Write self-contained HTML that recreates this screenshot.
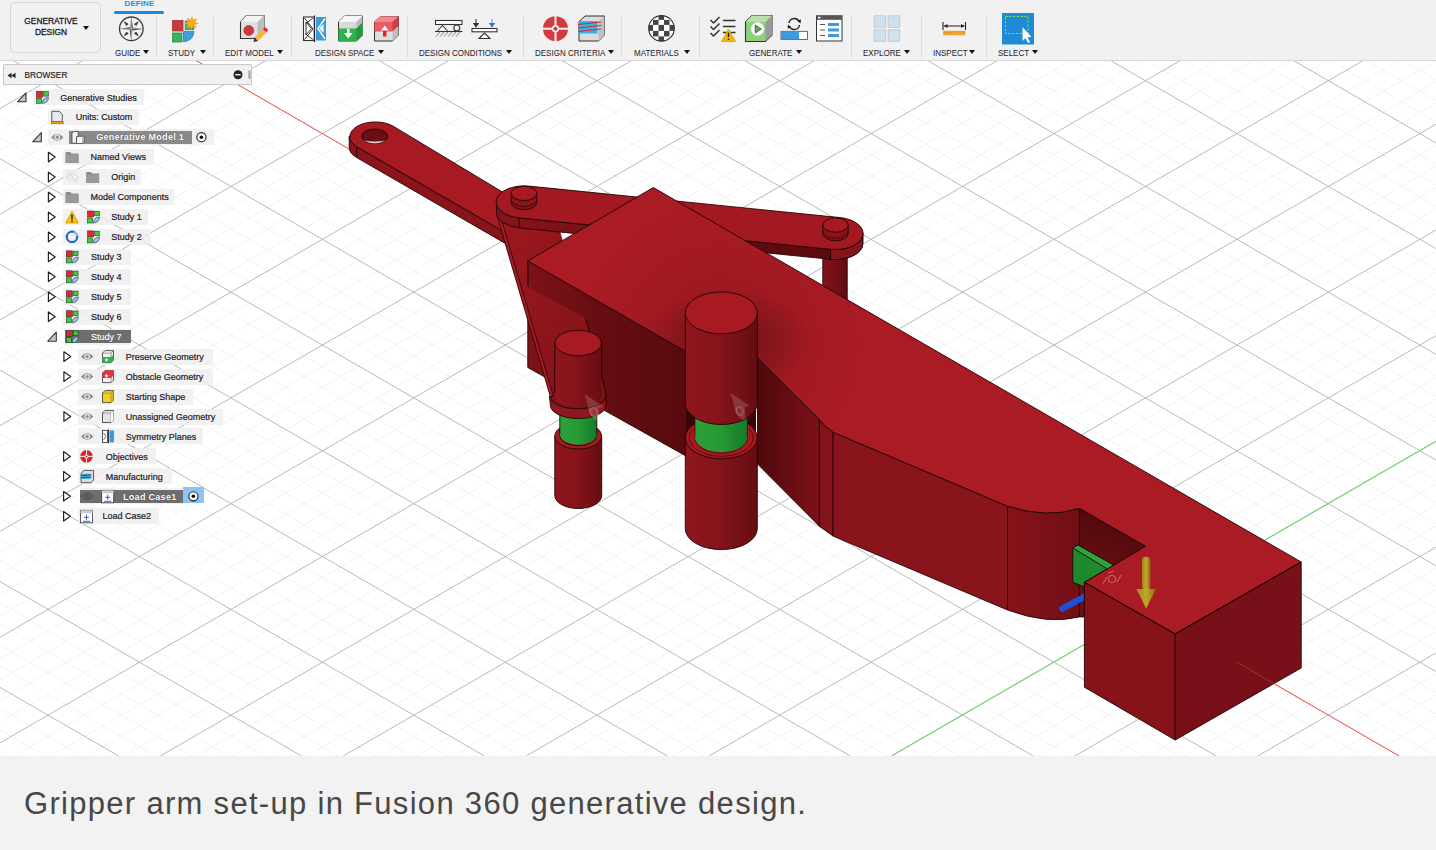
<!DOCTYPE html>
<html><head><meta charset="utf-8"><title>Gripper arm set-up</title>
<style>
*{margin:0;padding:0;box-sizing:border-box}
html,body{width:1436px;height:850px;overflow:hidden;background:#fff;font-family:"Liberation Sans",sans-serif}
#tb{position:absolute;left:0;top:0;width:1436px;height:61px;background:#f1f1f1;border-bottom:1px solid #d6d6d6}
.gdbox{position:absolute;left:10px;top:2px;width:91px;height:51px;border:1px solid #d8d8d8;border-radius:5px}
.gdt{position:absolute;left:0;top:13px;width:80px;text-align:center;font-size:8.4px;line-height:11.3px;color:#1c1c28;-webkit-text-stroke:0.3px #1c1c28}
.tri{position:absolute;width:0;height:0;border-left:3px solid transparent;border-right:3px solid transparent;border-top:4px solid #111}
.define{position:absolute;left:124.5px;top:-1.2px;font-size:8px;font-weight:bold;color:#1d8fe1;letter-spacing:0.1px}
.defbar{position:absolute;left:114px;top:10.5px;width:50px;height:3.3px;border-radius:2px;background:#1a8ad8}
.sep{position:absolute;top:15px;width:1px;height:42px;background:#dcdcdc}
.lbl{position:absolute;top:48.2px;font-size:8px;line-height:10px;color:#2a2a34;white-space:nowrap;transform:scaleY(1.2);transform-origin:0 0;-webkit-text-stroke:0.05px #2a2a34}
#vp{position:absolute;left:0;top:60px;width:1436px;height:696px;background:#fff;overflow:hidden}
#cap{position:absolute;left:0;top:756px;width:1436px;height:94px;background:#f2f2f2}
#cap div{position:absolute;left:24px;top:30px;font-size:31px;line-height:36px;color:#474747;white-space:nowrap;letter-spacing:1.3px}
.bhdr{position:absolute;left:3px;top:64px;width:249px;height:20.5px;border-radius:2px 2px 0 0;background:#f0f0f0;border:1px solid #c9c9c9}
.bhtxt{position:absolute;left:20.5px;top:4.5px;font-size:8.3px;line-height:11px;color:#222;-webkit-text-stroke:0.15px #222}
.rbg{position:absolute;height:16px;background:rgba(238,238,238,0.85)}
.rhl{position:absolute;height:13px;background:#7b7b7b}
.rblue{position:absolute;width:20.6px;height:16.4px;background:#8cc4f5}
.rtxt{position:absolute;font-size:9px;line-height:10px;color:#1a1a26;white-space:nowrap;margin-top:2.3px;-webkit-text-stroke:0.2px #1a1a26}
.hlt{color:#fff;-webkit-text-stroke:0.2px #fff;text-shadow:0 0 1px #333}
.hlb{font-weight:bold;letter-spacing:0.3px;-webkit-text-stroke:0}
</style></head><body>
<svg width="1436" height="850" viewBox="0 0 1436 850" style="position:absolute;left:0;top:0">
<rect x="0" y="59" width="1436" height="697" fill="#fff"/>
<path d="M1400.6 59.0L1436.0 79.5M1364.0 59.0L1436.0 100.6M1327.5 59.0L1436.0 121.8M1254.3 59.0L1436.0 164.0M1217.7 59.0L1436.0 185.2M1181.1 59.0L1436.0 206.3M1144.5 59.0L1436.0 227.5M1071.4 59.0L1436.0 269.8M1034.8 59.0L1436.0 290.9M998.2 59.0L1436.0 312.1M961.6 59.0L1436.0 333.2M888.5 59.0L1436.0 375.5M851.9 59.0L1436.0 396.7M815.3 59.0L1436.0 417.8M778.7 59.0L1436.0 439.0M705.6 59.0L1436.0 481.3M669.0 59.0L1436.0 502.4M632.4 59.0L1436.0 523.6M595.8 59.0L1436.0 544.7M522.7 59.0L1436.0 587.0M486.1 59.0L1436.0 608.2M449.5 59.0L1436.0 629.3M412.9 59.0L1436.0 650.5M339.7 59.0L1436.0 692.7M303.2 59.0L1436.0 713.9M266.6 59.0L1436.0 735.0M230.0 59.0L1435.7 756.0M156.8 59.0L1362.5 756.0M120.3 59.0L1325.9 756.0M83.7 59.0L1289.3 756.0M47.1 59.0L1252.8 756.0M0.0 74.1L1179.6 756.0M0.0 95.2L1143.0 756.0M0.0 116.4L1106.4 756.0M0.0 137.5L1069.9 756.0M0.0 179.8L996.7 756.0M0.0 201.0L960.1 756.0M0.0 222.1L923.5 756.0M0.0 243.3L886.9 756.0M0.0 285.6L813.8 756.0M0.0 306.7L777.2 756.0M0.0 327.9L740.6 756.0M0.0 349.0L704.0 756.0M0.0 391.3L630.9 756.0M0.0 412.4L594.3 756.0M0.0 433.6L557.7 756.0M0.0 454.7L521.1 756.0M0.0 497.0L448.0 756.0M0.0 518.2L411.4 756.0M0.0 539.3L374.8 756.0M0.0 560.5L338.2 756.0M0.0 602.8L265.1 756.0M0.0 623.9L228.5 756.0M0.0 645.1L191.9 756.0M0.0 666.2L155.3 756.0M0.0 708.5L82.1 756.0M0.0 729.7L45.6 756.0M0.0 750.8L9.0 756.0M0.0 66.2L12.4 59.0M0.0 87.3L49.0 59.0M0.0 129.6L122.2 59.0M0.0 150.8L158.7 59.0M0.0 171.9L195.3 59.0M0.0 193.1L231.9 59.0M0.0 235.4L305.1 59.0M0.0 256.5L341.7 59.0M0.0 277.7L378.2 59.0M0.0 298.8L414.8 59.0M0.0 341.1L488.0 59.0M0.0 362.2L524.6 59.0M0.0 383.4L561.1 59.0M0.0 404.5L597.7 59.0M0.0 446.8L670.9 59.0M0.0 468.0L707.5 59.0M0.0 489.1L744.1 59.0M0.0 510.3L780.6 59.0M0.0 552.6L853.8 59.0M0.0 573.7L890.4 59.0M0.0 594.9L927.0 59.0M0.0 616.0L963.5 59.0M0.0 658.3L1036.7 59.0M0.0 679.5L1073.3 59.0M0.0 700.6L1109.9 59.0M0.0 721.8L1146.5 59.0M13.9 756.0L1219.6 59.0M50.5 756.0L1256.2 59.0M87.1 756.0L1292.8 59.0M123.7 756.0L1329.4 59.0M196.9 756.0L1402.5 59.0M233.4 756.0L1436.0 60.8M270.0 756.0L1436.0 81.9M306.6 756.0L1436.0 103.1M379.8 756.0L1436.0 145.4M416.3 756.0L1436.0 166.5M452.9 756.0L1436.0 187.7M489.5 756.0L1436.0 208.8M562.7 756.0L1436.0 251.1M599.3 756.0L1436.0 272.3M635.8 756.0L1436.0 293.4M672.4 756.0L1436.0 314.6M745.6 756.0L1436.0 356.9M782.2 756.0L1436.0 378.0M818.7 756.0L1436.0 399.2M855.3 756.0L1436.0 420.3M928.5 756.0L1436.0 462.6M965.1 756.0L1436.0 483.8M1001.7 756.0L1436.0 504.9M1038.2 756.0L1436.0 526.1M1111.4 756.0L1436.0 568.3M1148.0 756.0L1436.0 589.5M1184.6 756.0L1436.0 610.6M1221.1 756.0L1436.0 631.8M1294.3 756.0L1436.0 674.1M1330.9 756.0L1436.0 695.2M1367.5 756.0L1436.0 716.4M1404.1 756.0L1436.0 737.5" stroke="#f3f3f3" stroke-width="1" fill="none"/>
<path d="M1290.9 59.0L1436.0 142.9M1108.0 59.0L1436.0 248.6M925.1 59.0L1436.0 354.4M742.1 59.0L1436.0 460.1M559.2 59.0L1436.0 565.9M376.3 59.0L1436.0 671.6M193.4 59.0L1399.1 756.0M10.5 59.0L1216.2 756.0M0.0 158.7L1033.3 756.0M0.0 264.4L850.4 756.0M0.0 370.1L667.5 756.0M0.0 475.9L484.5 756.0M0.0 581.6L301.6 756.0M0.0 687.4L118.7 756.0M0.0 108.5L85.6 59.0M0.0 214.2L268.5 59.0M0.0 320.0L451.4 59.0M0.0 425.7L634.3 59.0M0.0 531.4L817.2 59.0M0.0 637.2L1000.1 59.0M0.0 742.9L1183.0 59.0M160.3 756.0L1365.9 59.0M343.2 756.0L1436.0 124.2M526.1 756.0L1436.0 230.0M709.0 756.0L1436.0 335.7M891.9 756.0L1436.0 441.5M1074.8 756.0L1436.0 547.2M1257.7 756.0L1436.0 652.9" stroke="#b5b5b5" stroke-width="0.95" fill="none"/>
<path d="M195.1 60 L1399.1 756" stroke="#ff5a5a" stroke-width="1" fill="none"/>
<path d="M892 755.5 L1436 441" stroke="#5de05d" stroke-width="1" fill="none"/>
</svg>
<svg id="model" width="1436" height="850" viewBox="0 0 1436 850" style="position:absolute;left:0;top:0">
<defs>
  <linearGradient id="gCyl" x1="0" x2="1" y1="0" y2="0">
    <stop offset="0" stop-color="#8f161d"/><stop offset="0.45" stop-color="#86141b"/><stop offset="1" stop-color="#660d12"/>
  </linearGradient>
  <linearGradient id="gGreen" x1="0" x2="1" y1="0" y2="0">
    <stop offset="0" stop-color="#2ea03a"/><stop offset="0.5" stop-color="#259a33"/><stop offset="1" stop-color="#17782a"/>
  </linearGradient>
  <linearGradient id="gCham" x1="0" x2="1" y1="0" y2="0">
    <stop offset="0" stop-color="#4e080c"/><stop offset="1" stop-color="#7c1218"/>
  </linearGradient>
  <linearGradient id="gRecess" x1="0" x2="1" y1="0" y2="0">
    <stop offset="0" stop-color="#7e1218"/><stop offset="0.45" stop-color="#660d12"/><stop offset="1" stop-color="#580a0e"/>
  </linearGradient>
  <linearGradient id="gGusset" x1="0" x2="1" y1="0" y2="1">
    <stop offset="0" stop-color="#9e1820"/><stop offset="1" stop-color="#7e1218"/>
  </linearGradient>
  <linearGradient id="gNotch" x1="0" x2="1" y1="0" y2="0">
    <stop offset="0" stop-color="#86131a"/><stop offset="1" stop-color="#720f15"/>
  </linearGradient>
  <radialGradient id="gTopShade" gradientUnits="userSpaceOnUse" cx="720" cy="345" r="150">
    <stop offset="0" stop-color="#000" stop-opacity="0.12"/><stop offset="1" stop-color="#000" stop-opacity="0"/>
  </radialGradient>
  <linearGradient id="gNotchWall" gradientUnits="userSpaceOnUse" x1="1120" y1="525" x2="1095" y2="590">
    <stop offset="0" stop-color="#520a0d"/><stop offset="1" stop-color="#6e0f14"/>
  </linearGradient>
  <linearGradient id="gLinkSide" gradientUnits="userSpaceOnUse" x1="519" y1="0" x2="760" y2="0">
    <stop offset="0" stop-color="#85131a"/><stop offset="1" stop-color="#5e0b10"/>
  </linearGradient>
  <linearGradient id="gPost" x1="0" x2="1" y1="0" y2="0">
    <stop offset="0" stop-color="#85131a"/><stop offset="1" stop-color="#600c11"/>
  </linearGradient>
  <clipPath id="cpTop"><path d="M527.8 260.9 L653.3 187.5 L1301.2 562 L1175.2 634 L1084.4 582.3 L1145.3 546.3 L1079.4 508.5 Q1048 519 1007.5 506.4 L833.1 432.4 Q826 428.5 819.4 419.7 L757.5 357.9 L687.8 352.6Z"/></clipPath>
  <radialGradient id="gAO">
    <stop offset="0" stop-color="#000" stop-opacity="0.22"/><stop offset="0.5" stop-color="#000" stop-opacity="0.16"/><stop offset="1" stop-color="#000" stop-opacity="0"/>
  </radialGradient>
  <linearGradient id="gArrow" x1="0" x2="1" y1="0" y2="0">
    <stop offset="0" stop-color="#a08818"/><stop offset="0.5" stop-color="#c4a72a"/><stop offset="1" stop-color="#857010"/>
  </linearGradient>
</defs>
<g stroke="#1e0406" stroke-width="0.9" stroke-linejoin="round">
  <!-- vertical post under right link pivot -->
  <rect x="822.8" y="245" width="24.4" height="56" fill="url(#gPost)"/>
  <!-- lever arm side face -->
  <path d="M349.2 136.3 A25.5 14.7 0 0 0 356.7 146.7 L525 243.9 L525 254.8 L356.7 157.6 A25.5 14.7 0 0 1 349.2 147.2Z" fill="#8a141b"/>
  <line x1="356.7" y1="146.7" x2="356.7" y2="157.6"/>
  <!-- lever arm top face -->
  <path d="M392.7 125.9 A25.5 14.7 0 0 0 356.7 146.7 L525 243.9 L530 208.6Z" fill="#a81a22"/>
  <!-- hole -->
  <ellipse cx="374.7" cy="136.3" rx="12.9" ry="7.3" fill="#6a0e13"/>
  <path d="M364 140.5 Q374.7 146.5 385.4 140.5 Q374.7 142.5 364 140.5Z" fill="#cfcfcf" stroke="none"/>

  <!-- body left recessed front face -->
  <path d="M527.8 260.9 L687.8 352.6 L687.8 457 L527.8 367.5Z" fill="url(#gRecess)"/>

  <!-- lower small cylinder -->
  <path d="M554.8 436 L554.8 495.5 A23.4 13 0 0 0 601.7 495.5 L601.7 436Z" fill="url(#gCyl)"/>
  <ellipse cx="578.2" cy="436" rx="23.4" ry="13" fill="#a51a21"/>
  <!-- green ring small -->
  <rect x="559.8" y="412" width="37" height="23.1" fill="url(#gGreen)" stroke="none"/>
  <path d="M559.8 412 L559.8 435.1 A18.5 10.7 0 0 0 596.8 435.1 L596.8 412" fill="none"/>
  <path d="M559.8 434 A18.5 10.7 0 0 0 596.8 434 Z" fill="url(#gGreen)" stroke="none"/>

  <!-- gusset band (thickness) -->
  <path d="M549.4 396 A27.6 13 0 0 0 605.9 395 L605.9 405 A27.6 13 0 0 1 550.5 406 Z" fill="#8e161d"/>
  <!-- gusset face -->
  <path d="M496.5 214 L560 231 L576.6 288.2 L527.8 260.9 L527.8 286.7 L585.5 318.2 L601.5 374 L605.9 395 A27.6 13 0 0 1 550.2 396 Z" fill="url(#gGusset)" stroke="none"/><path d="M585.5 318.2 L601.5 374 L605.9 395" fill="none"/>
  <path d="M496.5 214 L499.8 214 L553.5 396.5 L550.2 396 Z" fill="#a81b23" stroke-width="0.8"/>

  <!-- link plate side -->
  <path d="M496.5 202 A27.5 15.9 0 0 0 519.2 217.9 L830.5 249.3 A27.5 15.9 0 0 0 862.8 233.5 L862.8 243.5 A27.5 15.9 0 0 1 830.5 259.3 L519.2 227.9 A27.5 15.9 0 0 1 496.5 212Z" fill="url(#gLinkSide)"/>
  <line x1="519.2" y1="217.9" x2="519.2" y2="227.9"/>
  <path d="M830.5 249.3 A27.5 15.9 0 0 0 862.8 233.5 L862.8 243.5 A27.5 15.9 0 0 1 830.5 259.3Z" fill="#86141b"/>
  <line x1="830.5" y1="249.3" x2="830.5" y2="259.3"/>
  <!-- link plate top -->
  <path d="M528.8 186.1 L840.1 217.6 A27.5 15.9 0 0 1 830.5 249.3 L519.2 217.9 A27.5 15.9 0 0 1 528.8 186.1Z" fill="#a31921"/>
  <!-- pins -->
  <path d="M511.2 193.4 L511.2 202.4 A12.8 7.2 0 0 0 536.8 202.4 L536.8 193.4Z" fill="#8a141b"/>
  <path d="M511.2 199.5 A12.8 7.2 0 0 0 536.8 199.5" fill="none" stroke-width="0.7"/>
  <ellipse cx="524" cy="193.4" rx="12.8" ry="7.2" fill="#a81a22"/>
  <path d="M822.8 225 L822.8 233.5 A12.7 7.2 0 0 0 848.2 233.5 L848.2 225Z" fill="#8a141b"/>
  <path d="M822.8 231 A12.7 7.2 0 0 0 848.2 231" fill="none" stroke-width="0.7"/>
  <ellipse cx="835.5" cy="225" rx="12.7" ry="7.2" fill="#a81a22"/>

  <!-- band (body front face above gusset) -->
  <line x1="527.8" y1="260.9" x2="527.8" y2="286.7"/>

  <!-- body top face -->
  <path d="M527.8 260.9 L653.3 187.5 L1301.2 562 L1175.2 634 L1084.4 582.3 L1145.3 546.3 L1079.4 508.5 Q1048 519 1007.5 506.4 L833.1 432.4 Q826 428.5 819.4 419.7 L757.5 357.9 L687.8 352.6Z" fill="#ab1b24"/>

  <path d="M527.8 260.9 L653.3 187.5 L1301.2 562 L1175.2 634 L1084.4 582.3 L1145.3 546.3 L1079.4 508.5 Q1048 519 1007.5 506.4 L833.1 432.4 Q826 428.5 819.4 419.7 L757.5 357.9 L687.8 352.6Z" fill="url(#gTopShade)" stroke="none"/>
  <ellipse cx="728" cy="340" rx="85" ry="52" fill="url(#gAO)" stroke="none" clip-path="url(#cpTop)"/>
  <!-- chamfer face -->
  <path d="M757.5 357.9 L819.4 419.7 L819.4 526.2 L757.5 464Z" fill="url(#gCham)"/>
  <path d="M819.4 419.7 Q826 428.5 833.1 432.4 L833.1 536.1 L819.4 526.2Z" fill="#83131a"/>
  <!-- front face -->
  <path d="M833.1 432.4 L1007.5 506.4 L1007.5 610 L833.1 536.1Z" fill="#8a141b"/>
  <!-- notch fillet face -->
  <path d="M1007.5 506.4 Q1048 519 1079.4 508.5 L1079.4 616.9 Q1048 625 1007.5 610Z" fill="url(#gNotch)"/>
  <!-- notch dark back wall -->
  <path d="M1079.4 508.5 L1145.3 546.3 L1084.4 582.3 L1084.4 616.9 L1079.4 616.9Z" fill="url(#gNotchWall)"/>
  <!-- green block -->
  <path d="M1072.8 548 L1078 545 L1113.5 565 L1084.4 582.3 L1084.4 587 L1072.8 582.3Z" fill="#1f8a2c"/>
  <path d="M1072.8 548 L1078 545 L1113.5 565 L1107.5 569Z" fill="#2ea33b"/>
  <!-- blue rod -->
  <line x1="1062.5" y1="608.5" x2="1084" y2="597" stroke="#1d4fd8" stroke-width="6.5" stroke-linecap="round"/>

  <!-- block -->
  <path d="M1084.4 582.3 L1175.2 634 L1175.2 740 L1084.4 687.2Z" fill="#87131a"/>
  <path d="M1175.2 634 L1301.2 562 L1301.2 668 L1175.2 740Z" fill="#78101a"/>
  <path d="M1084.4 582.3 L1175.2 634 L1301.2 562" fill="none"/>

  <path d="M1236 661.7 L1301.2 699.4" stroke="#ff6060" stroke-opacity="0.35" stroke-width="1"/>
  <!-- upper small cylinder -->
  <path d="M554.8 343 L554.8 395 A23.4 13 0 0 0 601.7 395 L601.7 343Z" fill="url(#gCyl)" stroke="none"/>
  <path d="M554.8 343 L554.8 393 M601.7 343 L601.7 377" fill="none"/>
  <path d="M550.2 396 A27.6 13 0 0 0 605.9 395" fill="none" stroke-width="0.9"/>
  <ellipse cx="578.2" cy="343" rx="23.2" ry="12.8" fill="#a81a22"/>

  <!-- big cylinder: dark gap, lower, green, upper -->
  <rect x="686" y="408" width="70" height="32" fill="#3a0508" stroke="none"/>
  <path d="M685.3 437.8 L685.3 528.6 A36 21 0 0 0 757.3 528.6 L757.3 437.8Z" fill="url(#gCyl)"/>
  <ellipse cx="721.3" cy="437.8" rx="36" ry="21" fill="#a51a21"/>
  <ellipse cx="721.3" cy="437.8" rx="32" ry="18.5" fill="none" stroke-width="0.6"/>
  <rect x="695" y="405" width="52.4" height="33" fill="url(#gGreen)" stroke="none"/>
  <path d="M695 405 L695 437.9 A26.2 15.2 0 0 0 747.4 437.9 L747.4 405" fill="none" stroke-width="0.6"/>
  <path d="M695 437 A26.2 15.2 0 0 0 747.4 437Z" fill="url(#gGreen)" stroke="none"/>
  <path d="M685.3 312.9 L685.3 403.5 A36 21 0 0 0 757.3 403.5 L757.3 312.9Z" fill="url(#gCyl)"/>
  <ellipse cx="721.3" cy="312.9" rx="36" ry="21" fill="#a81a22"/>

  <!-- yellow arrow -->
  <g stroke="none">
    <rect x="1142" y="556.7" width="8.3" height="33" rx="4" fill="url(#gArrow)"/>
    <path d="M1136.3 589 L1156 589 L1146.2 608.6Z" fill="url(#gArrow)"/>
  </g>
</g>
<!-- ghost icons -->
<defs><g id="ghost">
  <path d="M-9.5 -13.5 Q-9 -14.8 -7.5 -13.8 L8.5 -3.2 Q9.8 -1.8 8 -1.5 L4.8 -1.2 L5.5 11 L2 11.5 Q-5.5 6.5 -6.2 -3 Q-6.8 -9 -9.5 -13.5Z" fill="#fff" fill-opacity="0.16"/>
  <ellipse cx="-0.3" cy="3" rx="3.4" ry="4.3" transform="rotate(-20 -0.3 3)" fill="none" stroke="#fff" stroke-opacity="0.2" stroke-width="1.1"/>
  <circle cx="-0.3" cy="3.2" r="1.3" fill="#000" fill-opacity="0.15"/>
</g></defs>
<use href="#ghost" x="740" y="408"/>
<use href="#ghost" x="594" y="409"/>
<g fill="none" stroke="#fff" stroke-opacity="0.3" stroke-width="1.2">
  <circle cx="1112" cy="579" r="3.5"/><path d="M1103 584 L1107 577 M1117 582 L1121 575 M1108 573 L1114 571"/>
</g>
</svg>

<div id="cap"><div>Gripper arm set-up in Fusion 360 generative design.</div></div>
<div id="tb">
  <div class="gdbox"><div class="gdt">GENERATIVE<br>DESIGN</div><div class="tri" style="left:72px;top:23px"></div></div>
  <div class="define">DEFINE</div>
  <div class="defbar"></div>
  <div class="sep" style="left:156px"></div>
  <div class="sep" style="left:213px"></div>
  <div class="sep" style="left:291px"></div>
  <div class="sep" style="left:407px"></div>
  <div class="sep" style="left:523px"></div>
  <div class="sep" style="left:621px"></div>
  <div class="sep" style="left:699px"></div>
  <div class="sep" style="left:851px"></div>
  <div class="sep" style="left:921px"></div>
  <div class="sep" style="left:986px"></div>

  <div class="lbl" style="left:115px">GUIDE</div><div class="tri" style="left:143px;top:50px"></div>
  <div class="lbl" style="left:168px">STUDY</div><div class="tri" style="left:200px;top:50px"></div>
  <div class="lbl" style="left:225px">EDIT MODEL</div><div class="tri" style="left:277px;top:50px"></div>
  <div class="lbl" style="left:315px">DESIGN SPACE</div><div class="tri" style="left:378px;top:50px"></div>
  <div class="lbl" style="left:419px">DESIGN CONDITIONS</div><div class="tri" style="left:506px;top:50px"></div>
  <div class="lbl" style="left:535px">DESIGN CRITERIA</div><div class="tri" style="left:608px;top:50px"></div>
  <div class="lbl" style="left:634px">MATERIALS</div><div class="tri" style="left:684px;top:50px"></div>
  <div class="lbl" style="left:749px">GENERATE</div><div class="tri" style="left:796px;top:50px"></div>
  <div class="lbl" style="left:863px">EXPLORE</div><div class="tri" style="left:904px;top:50px"></div>
  <div class="lbl" style="left:933px">INSPECT</div><div class="tri" style="left:969px;top:50px"></div>
  <div class="lbl" style="left:998px">SELECT</div><div class="tri" style="left:1032px;top:50px"></div>

  <svg id="tbicons" width="1436" height="59" viewBox="0 0 1436 59" style="position:absolute;left:0;top:0">
    <!-- guide compass -->
    <g transform="translate(131.3,28.8)">
      <circle r="11.8" fill="none" stroke="#3a3a3a" stroke-width="1.3"/>
      <path d="M0 -12.5 L1.6 -1.6 L0 0Z M12.5 0 L1.6 1.6 L0 0Z M0 12.5 L-1.6 1.6 L0 0Z M-12.5 0 L-1.6 -1.6 L0 0Z" fill="#555"/>
      <path d="M0 -12.5 L-1.2 -1.2 L0 0Z M12.5 0 L1.2 -1.2 L0 0Z M0 12.5 L1.2 1.2 L0 0Z M-12.5 0 L-1.2 1.2 L0 0Z" fill="#888"/>
      <path d="M-6.8 -6.8 L-3.2 -4.8 L-4.8 -3.2Z M6.8 -6.8 L4.8 -3.2 L3.2 -4.8Z M6.8 6.8 L3.2 4.8 L4.8 3.2Z M-6.8 6.8 L-4.8 3.2 L-3.2 4.8Z" fill="#444" stroke="#444" stroke-width="1"/>
    </g>
    <!-- study -->
    <rect x="172.5" y="20.5" width="10.5" height="10.5" fill="#c9393f" stroke="#b02a30" stroke-width="0.8"/>
    <rect x="172.5" y="33" width="9.5" height="9" fill="#3ab35a" stroke="#259040" stroke-width="0.8"/>
    <rect x="185.2" y="21" width="8.5" height="8.7" fill="#3ab35a" stroke="#259040" stroke-width="0.8"/>
    <path d="M183.5 41.8 L183.5 31.5 L194 31.5 Q193.5 40.5 183.5 41.8Z" fill="#3e9ee0" stroke="#2a7fc0" stroke-width="0.8"/>
    <path d="M192 15.5 L193.3 19.8 L197.6 18 L195.3 22 L199.3 23.5 L195 24.8 L196.8 28.8 L192.7 26.6 L191.2 30.6 L189.9 26.4 L185.8 28.3 L188 24.2 L184 22.9 L188.3 21.6 L186.5 17.6 L190.6 19.8Z" fill="#f5a623"/>
    <!-- edit model -->
    <g>
      <path d="M240.5 22 L246.5 15.5 L264 15.5 L264 31 L257 38.5 L240.5 38.5Z" fill="#e0e0e0" stroke="#333" stroke-width="1.1"/>
      <path d="M240.5 22 L246.5 15.5 L264 15.5 L257.5 22Z" fill="#f4f4f4"/>
      <path d="M257.5 22 L264 15.5 L264 31 L257.5 38Z" fill="#bdbdbd"/>
      <circle cx="248.8" cy="30.5" r="5" fill="#c9393f" stroke="#a8262c" stroke-width="0.6"/>
      <path d="M254.5 37.5 L263 29 L266.5 32.5 L258 41Z" fill="#f5b43c"/>
      <path d="M263 29 L265 27 L268 30 L266.5 32.5Z" fill="#e8202a"/>
      <path d="M254.5 37.5 L258 41 L253.5 42Z" fill="#333"/>
    </g>
    <!-- symmetry -->
    <g>
      <rect x="303.5" y="17" width="10.8" height="23.5" fill="#fff" stroke="#333" stroke-width="1.1"/>
      <path d="M304.5 18 L313 29 L304.5 39.5 M313 18 L305.5 24 M313 39.5 L305.5 34 M306 22 L306 35 L311.5 28.5Z" fill="none" stroke="#333" stroke-width="1"/>
      <line x1="314.5" y1="15.5" x2="314.5" y2="42" stroke="#222" stroke-width="1.2"/>
      <rect x="316" y="17" width="10" height="23.5" fill="#3c9be0"/>
      <path d="M325 18.5 L318 28.5 L325 39" fill="none" stroke="#fff" stroke-width="1.4"/>
      <path d="M323.5 24 L319.5 28.5 L323.5 33Z" fill="#fff"/>
    </g>
    <!-- green cube -->
    <g>
      <path d="M338.5 22 L344.5 16 L362.5 16 L362.5 35 L356.5 41 L338.5 41Z" fill="#d9d9d9" stroke="#333" stroke-width="1"/>
      <path d="M338.5 22 L344.5 16 L362.5 16 L356.5 22Z" fill="#f6f6f6"/>
      <path d="M356.5 22 L362.5 16 L362.5 35 L356.5 41Z" fill="#bdbdbd"/>
      <path d="M338.5 28.5 L356.5 28.5 L362.5 22.5 L362.5 35 L356.5 41 L338.5 41Z" fill="#2fb24e"/>
      <path d="M356.5 28.5 L362.5 22.5 L362.5 35 L356.5 41Z" fill="#27963f"/>
      <path d="M347 29 L349.5 29 L349.5 33 L352.5 33 L348.3 38.5 L344 33 L347 33Z" fill="#fff"/>
    </g>
    <!-- red cube -->
    <g>
      <path d="M374.5 22 L380.5 16.5 L398.5 16.5 L398.5 35 L392.5 41 L374.5 41Z" fill="#dedede" stroke="#333" stroke-width="1"/>
      <path d="M374.5 22 L380.5 16.5 L398.5 16.5 L398.5 26 L392.5 31.5 L374.5 31.5Z" fill="#e85c62"/>
      <path d="M374.5 22 L380.5 16.5 L398.5 16.5 L392.5 22Z" fill="#f08a8e"/>
      <path d="M392.5 22 L398.5 16.5 L398.5 26 L392.5 31.5Z" fill="#c94047"/>
      <path d="M392.5 31.5 L398.5 26 L398.5 35 L392.5 41Z" fill="#bdbdbd"/>
      <rect x="383" y="30" width="3.5" height="6.5" fill="#e8202a"/>
      <path d="M384.8 25.5 L388.5 30.5 L381 30.5Z" fill="#fff"/>
    </g>
    <!-- support icon -->
    <g stroke="#333" fill="none" stroke-width="1.1">
      <rect x="435.5" y="20.5" width="26.5" height="4" fill="#fff"/>
      <path d="M437.5 31 L442.5 25.5 L447.5 31" fill="#fff"/>
      <circle cx="456.8" cy="28" r="3"/>
      <line x1="435" y1="31.5" x2="462.5" y2="31.5"/>
      <path d="M436 36.5 L440 32 M440 36.5 L444 32 M444 36.5 L448 32 M448 36.5 L452 32 M452 36.5 L456 32 M456 36.5 L460 32" stroke="#777" stroke-width="0.9"/>
    </g>
    <!-- load icon -->
    <g stroke="#333" fill="none" stroke-width="1.1">
      <rect x="472" y="28.5" width="25" height="3.3" fill="#fff"/>
      <path d="M479 38.5 L484.5 33 L490 38.5Z" fill="#fff"/>
      <line x1="476" y1="19" x2="476" y2="25"/>
      <path d="M473.8 23.5 L476 26.8 L478.2 23.5Z" fill="#333"/>
      <line x1="492" y1="19" x2="492" y2="25" stroke="#5a9af0"/>
      <path d="M489.8 23.5 L492 26.8 L494.2 23.5Z" fill="#2a76e8" stroke="#2a76e8"/>
    </g>
    <!-- target -->
    <g transform="translate(555.5,28.7)">
      <circle r="12.5" fill="#d23a3f"/>
      <rect x="-1" y="-13" width="2" height="26" fill="#f1f1f1"/>
      <rect x="-13" y="-1" width="26" height="2" fill="#f1f1f1"/>
      <circle r="3.6" fill="#f1f1f1"/>
      <circle r="2" fill="#d23a3f"/>
    </g>
    <!-- criteria cube -->
    <g>
      <path d="M579 21.5 L585 16 L604.5 16 L604.5 35 L598.5 41 L579 41Z" fill="#dcdcdc" stroke="#333" stroke-width="1"/>
      <path d="M598.5 21.5 L604.5 16 L604.5 35 L598.5 41Z" fill="#c0c0c0"/>
      <rect x="579" y="21" width="18.5" height="12.5" fill="#2fb3ea"/>
      <path d="M578 24.5 L601 22 M578 28 L601 25.5 M578 31.5 L601 29" stroke="#e8202a" stroke-width="1.1"/>
    </g>
    <!-- materials sphere -->
    <g transform="translate(661.5,28.4)">
      <clipPath id="sph"><circle r="13"/></clipPath>
      <circle r="13" fill="#fff"/>
      <g clip-path="url(#sph)" fill="#444">
        <rect x="-3" y="-13" width="5.5" height="4.5"/>
        <rect x="-8.5" y="-8.5" width="5.5" height="5"/><rect x="2.5" y="-8.5" width="5.5" height="5"/>
        <rect x="-13" y="-3.5" width="4.5" height="6"/><rect x="-3" y="-3.5" width="5.5" height="6"/><rect x="8" y="-3.5" width="5" height="6"/>
        <rect x="-8.5" y="2.5" width="5.5" height="5.5"/><rect x="2.5" y="2.5" width="5.5" height="5.5"/>
        <rect x="-3" y="8" width="5.5" height="5"/>
      </g>
      <circle r="12.8" fill="none" stroke="#333" stroke-width="1.1"/>
    </g>
    <!-- checklist -->
    <g stroke="#333" stroke-width="1.5" fill="none">
      <path d="M710.5 20 L713.5 23 L719.5 17 M710.5 26.5 L713.5 29.5 L719.5 23.5 M710.5 33 L713.5 36 L719.5 30"/>
      <path d="M723 20.5 L735.5 20.5 M723 26.5 L735.5 26.5 M723 32.5 L735.5 32.5"/>
      <path d="M728.5 29 L735.5 41.5 L721.5 41.5Z" fill="#f5b800" stroke="#e0a000" stroke-width="0.8"/>
      <path d="M728.5 32.5 L728.5 37 M728.5 38.5 L728.5 40" stroke="#222" stroke-width="1.4"/>
    </g>
    <!-- play cube -->
    <g>
      <path d="M745.5 22 L752 15.5 L772 15.5 L772 35 L765.5 41.5 L745.5 41.5Z" fill="#8fd07a" stroke="#333" stroke-width="1.1"/>
      <path d="M765.5 22 L772 15.5 L772 35 L765.5 41.5Z" fill="#9a9a9a"/>
      <path d="M745.5 22 L752 15.5 L772 15.5 L765.5 22Z" fill="#b8e0a8"/>
      <circle cx="757.5" cy="29" r="6.5" fill="#fff" stroke="#ddd" stroke-width="0.8"/>
      <path d="M755.2 25 L761.5 29 L755.2 33Z" fill="#4cb748" stroke="#333" stroke-width="0.7"/>
    </g>
    <!-- sync toggle -->
    <g>
      <path d="M789 23 A5.3 5.3 0 0 1 799 21.5 M799.5 25 A5.3 5.3 0 0 1 789.5 26.5" fill="none" stroke="#222" stroke-width="1.4"/>
      <path d="M797 20.5 L801 19.5 L800.5 23.5Z M791.5 27.5 L787.5 28.5 L788 24.5Z" fill="#222"/>
      <rect x="781" y="31.3" width="26.5" height="8.2" fill="#fff" stroke="#444" stroke-width="0.8"/>
      <rect x="781" y="31.3" width="18" height="8.2" fill="#3d9be0"/>
    </g>
    <!-- list window -->
    <g>
      <rect x="816.5" y="15.8" width="25.5" height="25.2" fill="#fff" stroke="#333" stroke-width="1"/>
      <rect x="816.5" y="15.8" width="25.5" height="4" fill="#555"/>
      <rect x="818" y="16.8" width="2.5" height="1.5" fill="#fff"/>
      <path d="M820 24.5 L825 24.5 M820 30 L825 30 M820 35.5 L825 35.5" stroke="#555" stroke-width="1.2"/>
      <rect x="828" y="23" width="11" height="3" fill="#3d9be0"/>
      <rect x="828" y="28.5" width="11" height="3" fill="#3d9be0"/>
      <rect x="828" y="34" width="11" height="3" fill="#3d9be0"/>
    </g>
    <!-- explore grid -->
    <g fill="#cfe1ef" stroke="#c9c9c9" stroke-width="1">
      <rect x="874.2" y="15.8" width="11.5" height="11.5"/><rect x="888.2" y="15.8" width="11.5" height="11.5"/>
      <rect x="874.2" y="29.8" width="11.5" height="11.5"/><rect x="888.2" y="29.8" width="11.5" height="11.5"/>
    </g>
    <!-- inspect -->
    <g>
      <rect x="943" y="30.8" width="22.5" height="4.5" fill="#f5a428"/>
      <path d="M945 31.5 v1.5 M948 31.5 v1 M951 31.5 v1.5 M954 31.5 v1 M957 31.5 v1.5 M960 31.5 v1 M963 31.5 v1.5" stroke="#a66" stroke-width="0.6"/>
      <path d="M943 22 v8 M965.5 22 v8" stroke="#222" stroke-width="1.1"/>
      <path d="M944 26 L964.5 26" stroke="#222" stroke-width="1"/>
      <path d="M944 26 L947.5 24 L947.5 28Z M964.5 26 L961 24 L961 28Z" fill="#222"/>
    </g>
    <!-- select -->
    <g>
      <rect x="1002" y="13" width="32" height="31.5" fill="#1f8ad6"/>
      <rect x="1005.5" y="16.5" width="22.5" height="17" fill="none" stroke="#7ee35a" stroke-width="1.1" stroke-dasharray="2.2 1.6"/>
      <path d="M1022.5 27 L1022.5 41 L1025.5 38 L1028 43 L1030 42 L1027.6 37.2 L1031.5 37Z" fill="#fff"/>
    </g>
  </svg>
</div>

<div class="rbg" style="left:32.8px;top:89.3px;width:110.8px"></div><div class="rtxt" style="left:60.3px;top:90.3px">Generative Studies</div><div class="rbg" style="left:48.2px;top:109.2px;width:90.5px"></div><div class="rtxt" style="left:75.7px;top:110.2px">Units: Custom</div><div class="rbg" style="left:48.2px;top:129.2px;width:165.7px"></div><div class="rhl" style="left:68.8px;top:130.7px;width:123.5px;background:#8a8a8a"></div><div class="rtxt hlt hlb" style="left:96.2px;top:130.2px">Generative Model 1</div><div class="rbg" style="left:63.0px;top:149.1px;width:90.5px"></div><div class="rtxt" style="left:90.6px;top:150.1px">Named Views</div><div class="rbg" style="left:63.0px;top:169.1px;width:78.2px"></div><div class="rtxt" style="left:111.2px;top:170.1px">Origin</div><div class="rbg" style="left:63.0px;top:189.1px;width:110.5px"></div><div class="rtxt" style="left:90.6px;top:190.1px">Model Components</div><div class="rbg" style="left:63.0px;top:209.0px;width:84.6px"></div><div class="rtxt" style="left:111.2px;top:210.0px">Study 1</div><div class="rbg" style="left:63.0px;top:228.9px;width:88.2px"></div><div class="rtxt" style="left:111.2px;top:229.9px">Study 2</div><div class="rbg" style="left:63.2px;top:248.9px;width:67.4px"></div><div class="rtxt" style="left:91.0px;top:249.9px">Study 3</div><div class="rbg" style="left:63.2px;top:268.8px;width:67.4px"></div><div class="rtxt" style="left:91.0px;top:269.8px">Study 4</div><div class="rbg" style="left:63.2px;top:288.8px;width:67.4px"></div><div class="rtxt" style="left:91.0px;top:289.8px">Study 5</div><div class="rbg" style="left:63.2px;top:308.8px;width:67.4px"></div><div class="rtxt" style="left:91.0px;top:309.8px">Study 6</div><div class="rbg" style="left:65.1px;top:328.7px;width:65.5px"></div><div class="rhl" style="left:65.1px;top:330.2px;width:65.5px;background:#6e6e6e"></div><div class="rtxt hlt" style="left:91.0px;top:329.7px">Study 7</div><div class="rbg" style="left:78.2px;top:348.6px;width:134.8px"></div><div class="rtxt" style="left:125.8px;top:349.6px">Preserve Geometry</div><div class="rbg" style="left:78.2px;top:368.6px;width:134.8px"></div><div class="rtxt" style="left:125.8px;top:369.6px">Obstacle Geometry</div><div class="rbg" style="left:78.2px;top:388.6px;width:114.7px"></div><div class="rtxt" style="left:125.8px;top:389.6px">Starting Shape</div><div class="rbg" style="left:78.2px;top:408.5px;width:144.8px"></div><div class="rtxt" style="left:125.8px;top:409.5px">Unassigned Geometry</div><div class="rbg" style="left:78.2px;top:428.4px;width:124.7px"></div><div class="rtxt" style="left:125.8px;top:429.4px">Symmetry Planes</div><div class="rbg" style="left:77.8px;top:448.4px;width:78.0px"></div><div class="rtxt" style="left:105.7px;top:449.4px">Objectives</div><div class="rbg" style="left:77.8px;top:468.4px;width:94.2px"></div><div class="rtxt" style="left:105.7px;top:469.4px">Manufacturing</div><div class="rbg" style="left:79.5px;top:488.3px;width:103.6px"></div><div class="rhl" style="left:79.5px;top:489.8px;width:103.6px;background:#6e6e6e"></div><div class="rblue" style="left:183.1px;top:486.8px"></div><div class="rtxt hlt hlb" style="left:123.0px;top:489.3px">Load Case1</div><div class="rbg" style="left:77.8px;top:508.2px;width:80.8px"></div><div class="rtxt" style="left:102.4px;top:509.2px">Load Case2</div>
<div class="bhdr"><div class="bhtxt">BROWSER</div></div>
<svg style="position:absolute;left:0;top:0" width="260" height="530" viewBox="0 0 260 530">
<path d="M7.5 75.5 L11.5 72.8 V78.2Z M11.5 75.5 L15.5 72.8 V78.2Z" fill="#222"/>
<circle cx="238" cy="74.7" r="4.5" fill="#222"/><rect x="235.3" y="74" width="5.4" height="1.4" fill="#eee"/>
<rect x="248.3" y="70.5" width="2.4" height="8.4" fill="#aaa"/>
<path d="M17.5 101.8 L26.0 92.8 L26.0 101.8Z" fill="#c8c8c8" stroke="#333" stroke-width="1.1" stroke-linejoin="round"/><g transform="translate(36.0,90.8)"><rect x="0.5" y="0.5" width="6" height="6" fill="#e8232a" stroke="#333" stroke-width="0.6"/><rect x="7.5" y="0.8" width="4.8" height="4.5" fill="#3ad03a" stroke="#333" stroke-width="0.6"/><rect x="0.5" y="7.5" width="5" height="5" fill="#3ad03a" stroke="#333" stroke-width="0.6"/><path d="M6.5 12.6 Q6 7 12.5 6.5 Q12.5 12 6.5 12.6Z" fill="#8fc4ee" stroke="#333" stroke-width="0.6"/></g><g transform="translate(50.8,110.8)"><path d="M1 0.5 H8.5 L11.5 3.5 V11 H1Z" fill="#e8eaf0" stroke="#333" stroke-width="0.8"/><rect x="0.5" y="11" width="12" height="2" fill="#f0a020" stroke="#c04010" stroke-width="0.5"/></g><circle cx="201.4" cy="137.2" r="4.6" fill="#fff" stroke="#222" stroke-width="1.1"/><circle cx="201.4" cy="137.2" r="1.8" fill="#111"/><path d="M32.8 141.7 L41.3 132.7 L41.3 141.7Z" fill="#c8c8c8" stroke="#333" stroke-width="1.1" stroke-linejoin="round"/><g transform="translate(50.8,130.7)"><path d="M0.3 6.5 Q6.5 -0.5 12.7 6.5 Q6.5 13.5 0.3 6.5Z" fill="#8e8e8e"/><circle cx="6.5" cy="6.5" r="2.9" fill="#e6e6e6"/><circle cx="6.5" cy="6.5" r="1.6" fill="#8e8e8e"/></g><g transform="translate(71.0,130.7)"><path d="M1 12.5 V2.5 L2.8 0.7 H7.2 V6 H5.5 V12.5Z" fill="#f4f4f4" stroke="#333" stroke-width="0.7"/><path d="M5.5 12.8 V7 L7 5.6 H13 V11.2 L11.5 12.8Z" fill="#f4f4f4" stroke="#333" stroke-width="0.7"/><path d="M11.5 12.8 V7 L13 5.6" fill="none" stroke="#999" stroke-width="0.6"/></g><path d="M48.4 152.3 L55.2 157.1 L48.4 161.9Z" fill="#fff" stroke="#222" stroke-width="1.2" stroke-linejoin="round"/><g transform="translate(65.3,150.6)"><path d="M0.3 1.5 H5 L6 2.8 H13.2 V12.3 H0.3Z" fill="#8a8a8a"/><rect x="0.3" y="4" width="12.9" height="8.3" fill="#999"/></g><path d="M48.4 172.3 L55.2 177.1 L48.4 181.9Z" fill="#fff" stroke="#222" stroke-width="1.2" stroke-linejoin="round"/><g transform="translate(65.9,170.6)"><path d="M0.5 6.5 Q6.5 0 12.5 6.5 Q6.5 13 0.5 6.5Z" fill="none" stroke="#ddd" stroke-width="1.2"/><path d="M2 1 L11 12" stroke="#ddd" stroke-width="1.2"/></g><g transform="translate(85.9,170.6)"><path d="M0.3 1.5 H5 L6 2.8 H13.2 V12.3 H0.3Z" fill="#8a8a8a"/><rect x="0.3" y="4" width="12.9" height="8.3" fill="#999"/></g><path d="M48.4 192.2 L55.2 197.1 L48.4 201.9Z" fill="#fff" stroke="#222" stroke-width="1.2" stroke-linejoin="round"/><g transform="translate(65.3,190.6)"><path d="M0.3 1.5 H5 L6 2.8 H13.2 V12.3 H0.3Z" fill="#8a8a8a"/><rect x="0.3" y="4" width="12.9" height="8.3" fill="#999"/></g><path d="M48.4 212.2 L55.2 217.0 L48.4 221.8Z" fill="#fff" stroke="#222" stroke-width="1.2" stroke-linejoin="round"/><g transform="translate(65.3,210.5)"><path d="M6.7 0.5 L13.2 12.5 H0.3Z" fill="#f7c31b" stroke="#d79a00" stroke-width="0.8"/><path d="M6.7 4 V9 M6.7 10 V11.5" stroke="#222" stroke-width="1.5"/></g><g transform="translate(87.0,210.5)"><rect x="0.5" y="0.5" width="6" height="6" fill="#e8232a" stroke="#333" stroke-width="0.6"/><rect x="7.5" y="0.8" width="4.8" height="4.5" fill="#3ad03a" stroke="#333" stroke-width="0.6"/><rect x="0.5" y="7.5" width="5" height="5" fill="#3ad03a" stroke="#333" stroke-width="0.6"/><path d="M6.5 12.6 Q6 7 12.5 6.5 Q12.5 12 6.5 12.6Z" fill="#8fc4ee" stroke="#333" stroke-width="0.6"/></g><path d="M48.4 232.1 L55.2 236.9 L48.4 241.8Z" fill="#fff" stroke="#222" stroke-width="1.2" stroke-linejoin="round"/><g transform="translate(65.3,230.4)"><circle cx="6.7" cy="6.5" r="5.2" fill="none" stroke="#1a6fc4" stroke-width="2.2"/><path d="M8.5 1.8 A5.2 5.2 0 0 1 11.6 5.5" fill="none" stroke="#9cc8ef" stroke-width="2.2"/></g><g transform="translate(87.0,230.4)"><rect x="0.5" y="0.5" width="6" height="6" fill="#e8232a" stroke="#333" stroke-width="0.6"/><rect x="7.5" y="0.8" width="4.8" height="4.5" fill="#3ad03a" stroke="#333" stroke-width="0.6"/><rect x="0.5" y="7.5" width="5" height="5" fill="#3ad03a" stroke="#333" stroke-width="0.6"/><path d="M6.5 12.6 Q6 7 12.5 6.5 Q12.5 12 6.5 12.6Z" fill="#8fc4ee" stroke="#333" stroke-width="0.6"/></g><path d="M48.4 252.1 L55.2 256.9 L48.4 261.7Z" fill="#fff" stroke="#222" stroke-width="1.2" stroke-linejoin="round"/><g transform="translate(65.8,250.4)"><rect x="0.5" y="0.5" width="6" height="6" fill="#e8232a" stroke="#333" stroke-width="0.6"/><rect x="7.5" y="0.8" width="4.8" height="4.5" fill="#3ad03a" stroke="#333" stroke-width="0.6"/><rect x="0.5" y="7.5" width="5" height="5" fill="#3ad03a" stroke="#333" stroke-width="0.6"/><path d="M6.5 12.6 Q6 7 12.5 6.5 Q12.5 12 6.5 12.6Z" fill="#8fc4ee" stroke="#333" stroke-width="0.6"/></g><path d="M48.4 272.0 L55.2 276.8 L48.4 281.6Z" fill="#fff" stroke="#222" stroke-width="1.2" stroke-linejoin="round"/><g transform="translate(65.8,270.3)"><rect x="0.5" y="0.5" width="6" height="6" fill="#e8232a" stroke="#333" stroke-width="0.6"/><rect x="7.5" y="0.8" width="4.8" height="4.5" fill="#3ad03a" stroke="#333" stroke-width="0.6"/><rect x="0.5" y="7.5" width="5" height="5" fill="#3ad03a" stroke="#333" stroke-width="0.6"/><path d="M6.5 12.6 Q6 7 12.5 6.5 Q12.5 12 6.5 12.6Z" fill="#8fc4ee" stroke="#333" stroke-width="0.6"/></g><path d="M48.4 292.0 L55.2 296.8 L48.4 301.6Z" fill="#fff" stroke="#222" stroke-width="1.2" stroke-linejoin="round"/><g transform="translate(65.8,290.3)"><rect x="0.5" y="0.5" width="6" height="6" fill="#e8232a" stroke="#333" stroke-width="0.6"/><rect x="7.5" y="0.8" width="4.8" height="4.5" fill="#3ad03a" stroke="#333" stroke-width="0.6"/><rect x="0.5" y="7.5" width="5" height="5" fill="#3ad03a" stroke="#333" stroke-width="0.6"/><path d="M6.5 12.6 Q6 7 12.5 6.5 Q12.5 12 6.5 12.6Z" fill="#8fc4ee" stroke="#333" stroke-width="0.6"/></g><path d="M48.4 311.9 L55.2 316.8 L48.4 321.6Z" fill="#fff" stroke="#222" stroke-width="1.2" stroke-linejoin="round"/><g transform="translate(65.8,310.2)"><rect x="0.5" y="0.5" width="6" height="6" fill="#e8232a" stroke="#333" stroke-width="0.6"/><rect x="7.5" y="0.8" width="4.8" height="4.5" fill="#3ad03a" stroke="#333" stroke-width="0.6"/><rect x="0.5" y="7.5" width="5" height="5" fill="#3ad03a" stroke="#333" stroke-width="0.6"/><path d="M6.5 12.6 Q6 7 12.5 6.5 Q12.5 12 6.5 12.6Z" fill="#8fc4ee" stroke="#333" stroke-width="0.6"/></g><path d="M47.8 341.2 L56.3 332.2 L56.3 341.2Z" fill="#c8c8c8" stroke="#333" stroke-width="1.1" stroke-linejoin="round"/><g transform="translate(65.8,330.2)"><rect x="0.5" y="0.5" width="6" height="6" fill="#e8232a" stroke="#333" stroke-width="0.6"/><rect x="7.5" y="0.8" width="4.8" height="4.5" fill="#3ad03a" stroke="#333" stroke-width="0.6"/><rect x="0.5" y="7.5" width="5" height="5" fill="#3ad03a" stroke="#333" stroke-width="0.6"/><path d="M6.5 12.6 Q6 7 12.5 6.5 Q12.5 12 6.5 12.6Z" fill="#8fc4ee" stroke="#333" stroke-width="0.6"/></g><path d="M63.9 351.8 L70.7 356.6 L63.9 361.4Z" fill="#fff" stroke="#222" stroke-width="1.2" stroke-linejoin="round"/><g transform="translate(80.7,350.1)"><path d="M0.3 6.5 Q6.5 -0.5 12.7 6.5 Q6.5 13.5 0.3 6.5Z" fill="#8e8e8e"/><circle cx="6.5" cy="6.5" r="2.9" fill="#e6e6e6"/><circle cx="6.5" cy="6.5" r="1.6" fill="#8e8e8e"/></g><g transform="translate(102.0,350.1)"><path d="M0.5 3 L3 0.5 H11.5 V10 L9 12.5 H0.5Z" fill="#f0f0f0" stroke="#333" stroke-width="0.8"/><path d="M0.5 3 H9 L11.5 0.5 M9 3 V12.5" fill="none" stroke="#555" stroke-width="0.5"/><path d="M0.5 7 H9 L11.5 4.5 V10 L9 12.5 H0.5Z" fill="#2cb34a"/><path d="M4.5 8 v3.5 M2.8 9.8 h3.5" stroke="#fff" stroke-width="1"/></g><path d="M63.9 371.8 L70.7 376.6 L63.9 381.4Z" fill="#fff" stroke="#222" stroke-width="1.2" stroke-linejoin="round"/><g transform="translate(80.7,370.1)"><path d="M0.3 6.5 Q6.5 -0.5 12.7 6.5 Q6.5 13.5 0.3 6.5Z" fill="#8e8e8e"/><circle cx="6.5" cy="6.5" r="2.9" fill="#e6e6e6"/><circle cx="6.5" cy="6.5" r="1.6" fill="#8e8e8e"/></g><g transform="translate(102.0,370.1)"><path d="M0.5 3 L3 0.5 H11.5 V10 L9 12.5 H0.5Z" fill="#f0f0f0" stroke="#333" stroke-width="0.8"/><path d="M0.5 3 H9 L11.5 0.5 M9 3 V12.5" fill="none" stroke="#555" stroke-width="0.5"/><path d="M0.5 3 L3 0.5 H11.5 V5.5 L9 8 H0.5Z" fill="#e8323a"/><path d="M4.5 4 v3.5 M2.8 5.8 h3.5" stroke="#fff" stroke-width="1"/></g><g transform="translate(80.7,390.1)"><path d="M0.3 6.5 Q6.5 -0.5 12.7 6.5 Q6.5 13.5 0.3 6.5Z" fill="#8e8e8e"/><circle cx="6.5" cy="6.5" r="2.9" fill="#e6e6e6"/><circle cx="6.5" cy="6.5" r="1.6" fill="#8e8e8e"/></g><g transform="translate(102.0,390.1)"><path d="M0.5 3 L3 0.5 H11.5 V10 L9 12.5 H0.5Z" fill="#f5d020" stroke="#333" stroke-width="0.8"/><path d="M0.5 3 H9 L11.5 0.5 M9 3 V12.5" fill="none" stroke="#555" stroke-width="0.5"/><path d="M9 3 L11.5 0.5 V10 L9 12.5Z" fill="#d8b010"/></g><path d="M63.9 411.7 L70.7 416.5 L63.9 421.3Z" fill="#fff" stroke="#222" stroke-width="1.2" stroke-linejoin="round"/><g transform="translate(80.7,410.0)"><path d="M0.3 6.5 Q6.5 -0.5 12.7 6.5 Q6.5 13.5 0.3 6.5Z" fill="#8e8e8e"/><circle cx="6.5" cy="6.5" r="2.9" fill="#e6e6e6"/><circle cx="6.5" cy="6.5" r="1.6" fill="#8e8e8e"/></g><g transform="translate(102.0,410.0)"><path d="M0.5 3 L3 0.5 H11.5 V10 L9 12.5 H0.5Z" fill="#e4e6ec" stroke="#333" stroke-width="0.8"/><path d="M0.5 3 H9 L11.5 0.5 M9 3 V12.5" fill="none" stroke="#555" stroke-width="0.5"/><path d="M9 3 L11.5 0.5 V10 L9 12.5Z" fill="#fff"/></g><g transform="translate(80.7,429.9)"><path d="M0.3 6.5 Q6.5 -0.5 12.7 6.5 Q6.5 13.5 0.3 6.5Z" fill="#8e8e8e"/><circle cx="6.5" cy="6.5" r="2.9" fill="#e6e6e6"/><circle cx="6.5" cy="6.5" r="1.6" fill="#8e8e8e"/></g><g transform="translate(102.0,429.9)"><rect x="0.5" y="0.5" width="5" height="12" fill="#fff" stroke="#333" stroke-width="0.8"/><path d="M1.5 3 L4 6.5 L1.5 10" fill="none" stroke="#333" stroke-width="0.7"/><path d="M6.5 -0.5 V13.5" stroke="#222" stroke-width="0.9"/><rect x="7.5" y="0.5" width="4.5" height="12" fill="#3c9be0"/></g><path d="M63.6 451.6 L70.4 456.4 L63.6 461.2Z" fill="#fff" stroke="#222" stroke-width="1.2" stroke-linejoin="round"/><g transform="translate(80.0,449.9)"><circle cx="6.5" cy="6.5" r="6.3" fill="#d8262c"/><path d="M6.5 0 V13 M0 6.5 H13" stroke="#f2f2f2" stroke-width="1"/><circle cx="6.5" cy="6.5" r="2" fill="#f2f2f2"/><circle cx="6.5" cy="6.5" r="1" fill="#d8262c"/></g><path d="M63.6 471.6 L70.4 476.4 L63.6 481.2Z" fill="#fff" stroke="#222" stroke-width="1.2" stroke-linejoin="round"/><g transform="translate(80.6,469.9)"><path d="M0.5 3.5 L3 0.5 H13 V10 L10.5 12.8 H0.5Z" fill="#d9dde3" stroke="#333" stroke-width="0.8"/><rect x="1" y="4" width="9" height="5" fill="#36a8e0"/><path d="M0 5.5 L11 4.8 M0 7.8 L11 7" stroke="#333" stroke-width="0.7"/></g><circle cx="193.4" cy="496.3" r="4.6" fill="#fff" stroke="#222" stroke-width="1.1"/><circle cx="193.4" cy="496.3" r="1.8" fill="#111"/><path d="M63.6 491.5 L70.4 496.3 L63.6 501.1Z" fill="#fff" stroke="#222" stroke-width="1.2" stroke-linejoin="round"/><g transform="translate(80.6,489.8)"><path d="M0.5 6.5 Q6.5 0 12.5 6.5 Q6.5 13 0.5 6.5Z" fill="#6a6a6a" stroke="#555" stroke-width="1.3"/><circle cx="6.5" cy="6.5" r="2" fill="#555"/></g><g transform="translate(101.2,489.8)"><rect x="0.5" y="0.5" width="12" height="12.5" fill="#fff" stroke="#333" stroke-width="0.8"/><rect x="0.5" y="0.5" width="12" height="3" fill="#c8ccd8"/><path d="M6.5 5 V10 M4 7.5 H9 M3 11.5 H10" stroke="#1a50d0" stroke-width="0.9"/></g><path d="M63.6 511.4 L70.4 516.2 L63.6 521.0Z" fill="#fff" stroke="#222" stroke-width="1.2" stroke-linejoin="round"/><g transform="translate(80.0,509.8)"><rect x="0.5" y="0.5" width="12" height="12.5" fill="#fff" stroke="#333" stroke-width="0.8"/><rect x="0.5" y="0.5" width="12" height="3" fill="#c8ccd8"/><path d="M6.5 5 V10 M4 7.5 H9 M3 11.5 H10" stroke="#1a50d0" stroke-width="0.9"/></g></svg>
</body></html>
